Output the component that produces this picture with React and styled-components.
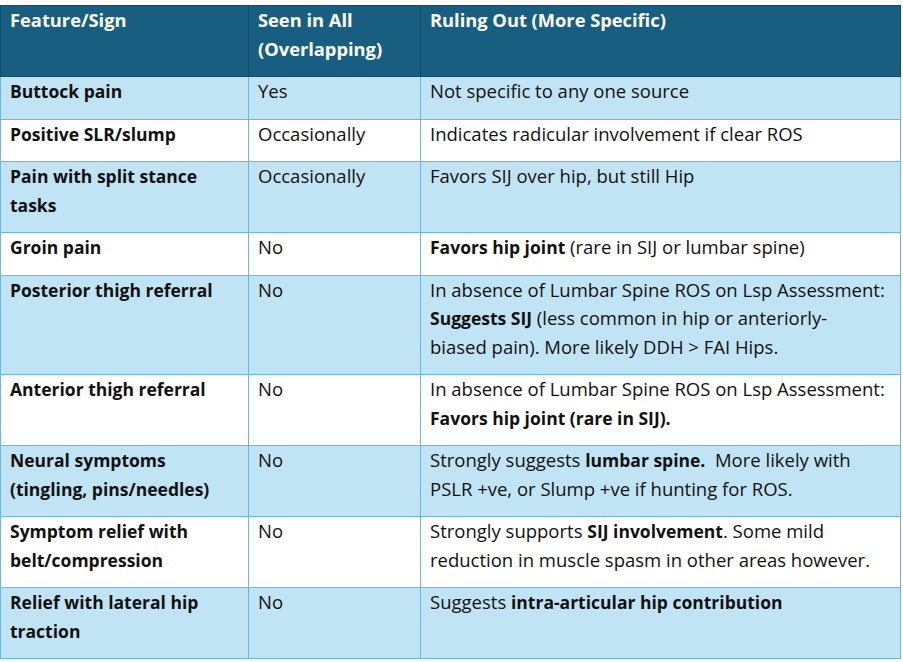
import React from 'react';
import styled, { createGlobalStyle } from 'styled-components';

const GlobalStyle = createGlobalStyle`
  body {
    margin: 0;
    background: #fff;
    font-family: "Open Sans", "Liberation Sans", sans-serif;
  }
`;

const rows = [
  { sign: 'Buttock pain', seen: 'Yes', out: <>Not specific to any one source</> },
  { sign: 'Positive SLR/slump', seen: 'Occasionally', out: <>Indicates radicular involvement if clear ROS</> },
  { sign: <>Pain with split stance<br />tasks</>, seen: 'Occasionally', out: <>Favors SIJ over hip, but still Hip</> },
  { sign: 'Groin pain', seen: 'No', out: <><b>Favors hip joint</b> (rare in SIJ or lumbar spine)</> },
  {
    sign: 'Posterior thigh referral',
    seen: 'No',
    out: (
      <>
        In absence of Lumbar Spine ROS on Lsp Assessment:<br />
        <b>Suggests SIJ</b> (less common in hip or anteriorly-<br />
        biased pain). More likely DDH &gt; FAI Hips.
      </>
    ),
  },
  {
    sign: 'Anterior thigh referral',
    seen: 'No',
    out: (
      <>
        In absence of Lumbar Spine ROS on Lsp Assessment:<br />
        <b>Favors hip joint (rare in SIJ).</b>
      </>
    ),
  },
  {
    sign: <>Neural symptoms<br />(tingling, pins/needles)</>,
    seen: 'No',
    out: (
      <>
        Strongly suggests <b>lumbar spine.</b>&nbsp; More likely with<br />
        PSLR +ve, or Slump +ve if hunting for ROS.
      </>
    ),
  },
  {
    sign: <>Symptom relief with<br />belt/compression</>,
    seen: 'No',
    out: (
      <>
        Strongly supports <b>SIJ involvement</b>. Some mild<br />
        reduction in muscle spasm in other areas however.
      </>
    ),
  },
  {
    sign: <>Relief with lateral hip<br />traction</>,
    seen: 'No',
    out: <>Suggests <b>intra-articular hip contribution</b></>,
  },
];

export default function App() {
  return (
    <>
      <GlobalStyle />
      <Table>
        <colgroup>
          <col style={{ width: 248 }} />
          <col style={{ width: 172 }} />
          <col style={{ width: 480 }} />
        </colgroup>
        <thead>
          <tr>
            <Head>Feature/Sign</Head>
            <Head>Seen in All<br />(Overlapping)</Head>
            <Head>Ruling Out (More Specific)</Head>
          </tr>
        </thead>
        <tbody>
          {rows.map((r, i) => (
            <Row key={i} $shaded={i % 2 === 0}>
              <Cell $bold>{r.sign}</Cell>
              <Cell>{r.seen}</Cell>
              <Cell>{r.out}</Cell>
            </Row>
          ))}
        </tbody>
      </Table>
    </>
  );
}

const Table = styled.table`
  margin-top: 5px;
  width: 900px;
  border-collapse: collapse;
  table-layout: fixed;
  font-size: 18.5px;
  color: #111;
`;

const Head = styled.th`
  height: 71px;
  padding: 0 9px;
  box-sizing: border-box;
  vertical-align: top;
  text-align: left;
  background: #185e80;
  color: #fff;
  font-size: 18.3px;
  font-weight: 700;
  line-height: 28.5px;
  border: 1px solid #0f4d6b;
  white-space: nowrap;
`;

const Row = styled.tr`
  background: ${p => (p.$shaded ? '#c1e4f5' : '#fff')};
`;

const Cell = styled.td`
  padding: 0 9px 13px;
  vertical-align: top;
  line-height: 28.5px;
  font-size: ${p => (p.$bold ? '17.5px' : '18.5px')};
  font-weight: ${p => (p.$bold ? 700 : 400)};
  border: 1px solid #63b8e8;
  white-space: nowrap;

  b {
    font-weight: 700;
    font-size: 17.5px;
  }
`;
